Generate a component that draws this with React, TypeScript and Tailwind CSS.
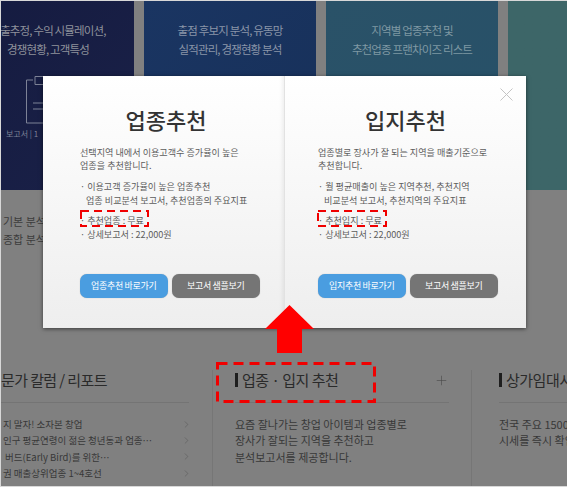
import { ChevronRight, Plus } from "lucide-react";

const cards = [
  { lines: ["매출추정, 수익 시뮬레이션,", "경쟁현황, 고객특성"], color: "from-[#151b40] to-[#1a2148]", text: "text-[#8f929b]", report: true },
  { lines: ["출점 후보지 분석, 유동망", "실적관리, 경쟁현황 분석"], color: "from-[#1a3562] to-[#173059]", text: "text-[#8a95a8]", report: false },
  { lines: ["지역별 업종추천 및", "추천업종 프랜차이즈 리스트"], color: "from-[#2a5268] to-[#275068]", text: "text-[#7f98a3]", report: false },
  { lines: [], color: "from-[#3d6668] to-[#3d6668]", text: "", report: false },
];

const columns = [
  { text: "지 말자! 소자본 창업", pad: "pl-[2px]" },
  { text: "인구 평균연령이 젊은 청년동과 업종…", pad: "pl-[2px]" },
  { text: "버드(Early Bird)를 위한…", pad: "pl-[4px]" },
  { text: "권 매출상위업종 1~4호선", pad: "pl-[2px]" },
];

const panels = [
  {
    title: "업종추천",
    intro: ["선택지역 내에서 이용고객수 증가율이 높은", "업종을 추천합니다."],
    list: ["이용고객 증가율이 높은 업종추천", "업종 비교분석 보고서, 추천업종의 주요지표"],
    free: "추천업종 : 무료",
    button: "업종추천 바로가기",
  },
  {
    title: "입지추천",
    intro: ["업종별로 장사가 잘 되는 지역을 매출기준으로", "추천합니다."],
    list: ["월 평균매출이 높은 지역추천, 추천지역", "비교분석 보고서, 추천지역의 주요지표"],
    free: "추천입지 : 무료",
    button: "입지추천 바로가기",
  },
];

export default function App() {
  return (
    <div className="relative h-[487px] w-[567px] overflow-hidden border-t border-l border-b border-[#d8d8d8] bg-[#808080] font-['Noto_Sans_CJK_KR','Noto_Sans',sans-serif]">
      {/* CARDS */}
      <div className="ml-[-39px] flex w-[740px] gap-[10px]">
        {cards.map((card, i) => (
          <div key={i} className="w-[172px] shrink-0">
            <div className={`flex h-[189px] flex-col items-center bg-gradient-to-br pt-[20px] ${card.color}`}>
              {card.lines.map((line) => (
                <p key={line} className={`text-[11.5px] leading-[19px] tracking-[-0.85px] whitespace-nowrap ${card.text}`}>
                  {line}
                </p>
              ))}
              {card.report && (
                <div className="mt-[17px] flex w-full flex-col pl-[64px]">
                  <svg width="30" height="48" viewBox="0 0 30 48" fill="none" stroke="#7d8296" strokeWidth="1">
                    <path d="M7 4H0.5V47H30" />
                    <path d="M9 0.5h9v8H9zM7 27h12M7 33h12" />
                  </svg>
                  <span className="mt-[5px] ml-[-20px] text-[8px] leading-[10px] whitespace-nowrap text-[#7d8296]">
                    보고서 | 1
                  </span>
                </div>
              )}
            </div>
            {card.report && (
              <div className="mt-[22px] pl-[41px] text-[11px] leading-[18px] whitespace-nowrap text-[#3c3c3c]">
                <p>기본 분석</p>
                <p>종합 분석</p>
              </div>
            )}
          </div>
        ))}
      </div>

      {/* BOTTOM COLUMNS */}
      <div className="absolute top-[369px] left-0 flex h-[120px] w-[600px]">
        <div className="w-[188px] shrink-0">
          <h3 className="mb-[12px] flex h-[20px] items-center text-[15px] tracking-[-0.6px] whitespace-nowrap text-[#2a2a2a]">
            문가 칼럼 / 리포트
          </h3>
          <div className="border-t border-[#747474] pt-[13px]">
            {columns.map((item) => (
              <div key={item.text} className={`flex h-[16.4px] items-center justify-between text-[9.5px] whitespace-nowrap text-[#383838] ${item.pad}`}>
                <span>{item.text}</span>
                <ChevronRight size={11} strokeWidth={1} className="mr-[-3px] text-[#505050]" />
              </div>
            ))}
          </div>
        </div>

        <div className="ml-[23px] w-[260px] shrink-0 border-x border-[#767676] px-[22px]">
          <div className="mb-[12px] flex h-[20px] items-center justify-between">
            <h3 className="flex items-center text-[15px] tracking-[-0.5px] whitespace-nowrap text-[#2a2a2a]">
              <span className="mr-[4px] h-[14px] w-[3px] bg-[#1e1e1e]" />
              업종 · 입지 추천
            </h3>
            <Plus size={15} strokeWidth={1} className="text-[#4a4a4a]" />
          </div>
          <div className="border-t border-[#747474] pt-[13px] text-[11px] leading-[16.4px] whitespace-nowrap text-[#383838]">
            <p>요즘 잘나가는 창업 아이템과 업종별로</p>
            <p>장사가 잘되는 지역을 추천하고</p>
            <p>분석보고서를 제공합니다.</p>
          </div>
        </div>

        <div className="ml-[27px] w-[200px] shrink-0">
          <h3 className="mb-[12px] flex h-[20px] items-center text-[15px] tracking-[-0.5px] whitespace-nowrap text-[#2a2a2a]">
            <span className="mr-[4px] h-[14px] w-[3px] bg-[#1e1e1e]" />
            상가임대시세
          </h3>
          <div className="border-t border-[#747474] pt-[13px] text-[11px] leading-[16.4px] whitespace-nowrap text-[#383838]">
            <p>전국 주요 1500개 상권</p>
            <p>시세를 즉시 확인</p>
          </div>
        </div>
      </div>

      {/* MODAL */}
      <div className="absolute top-[75px] left-[42px] flex h-[252px] w-[483px] bg-gradient-to-b from-white to-[#eeeeee] shadow-[0_1px_4px_rgba(0,0,0,0.55)]">
        <Panel panel={panels[0]} className="w-[241px] pl-[37px] shadow-[inset_-4px_0_4px_-3px_rgba(0,0,0,0.08)]" titleClass="ml-[5px] mr-[37px]" />
        <Panel panel={panels[1]} className="w-[242px] border-l border-[#e2e2e2] pl-[33px]" titleClass="mr-[33px]" />

        {/* close */}
        <svg className="absolute top-[12px] right-[13px]" width="13" height="13" viewBox="0 0 13 13" stroke="#c4c4c4" strokeWidth="1">
          <path d="M0.5 0.5 12.5 12.5M12.5 0.5 0.5 12.5" />
        </svg>
      </div>

      {/* RED ANNOTATIONS */}
      <Dashed className="absolute top-[209px] left-[79px]" w={69} h={17} stroke={2} />
      <Dashed className="absolute top-[209px] left-[316px]" w={70} h={17} stroke={2} />
      <Dashed className="absolute top-[361px] left-[215px]" w={160} h={41} stroke={3} />
      <svg className="absolute top-[304px] left-[264px]" width="50" height="50" viewBox="0 0 50 50" fill="#ff0000">
        <path d="M24.5 0 49 24H37V48H12V24H0Z" />
      </svg>
    </div>
  );
}

function Panel({ panel, className, titleClass }: { panel: (typeof panels)[number]; className: string; titleClass: string }) {
  return (
    <div className={`relative flex flex-col ${className}`}>
      <h2 className={`pt-[26px] text-center text-[22px] leading-[34px] font-medium text-[#333333] ${titleClass}`}>
        {panel.title}
      </h2>
      <div className="mt-[10px] text-[9.1px] leading-[13px] whitespace-nowrap text-[#5c5c5c]">
        {panel.intro.map((line) => (
          <p key={line}>{line}</p>
        ))}
      </div>
      <div className="mt-[7px] text-[9.1px] leading-[14px] whitespace-nowrap text-[#5c5c5c]">
        <p>· {panel.list[0]}</p>
        <p className="pl-[6px]">{panel.list[1]}</p>
        <p className="mt-[6px]">· {panel.free}</p>
        <p>· 상세보고서 : 22,000원</p>
      </div>
      <div className="mt-[33px] flex gap-[4.5px] text-[9px] tracking-[-0.3px] text-white">
        <button className="h-[24px] w-[87.5px] rounded-[7px] bg-[#4a9de0] shadow-[0_0_1px_rgba(0,0,0,0.3)]">
          {panel.button}
        </button>
        <button className="h-[24px] w-[87.5px] rounded-[7px] bg-[#757575] shadow-[0_0_1px_rgba(0,0,0,0.3)]">
          보고서 샘플보기
        </button>
      </div>
    </div>
  );
}

function Dashed({ className, w, h, stroke }: { className: string; w: number; h: number; stroke: number }) {
  return (
    <svg className={className} width={w} height={h} fill="none" stroke="#f00000" strokeWidth={stroke} strokeDasharray={stroke === 2 ? "8 5" : "10 6"}>
      <rect x={stroke / 2} y={stroke / 2} width={w - stroke} height={h - stroke} />
    </svg>
  );
}
